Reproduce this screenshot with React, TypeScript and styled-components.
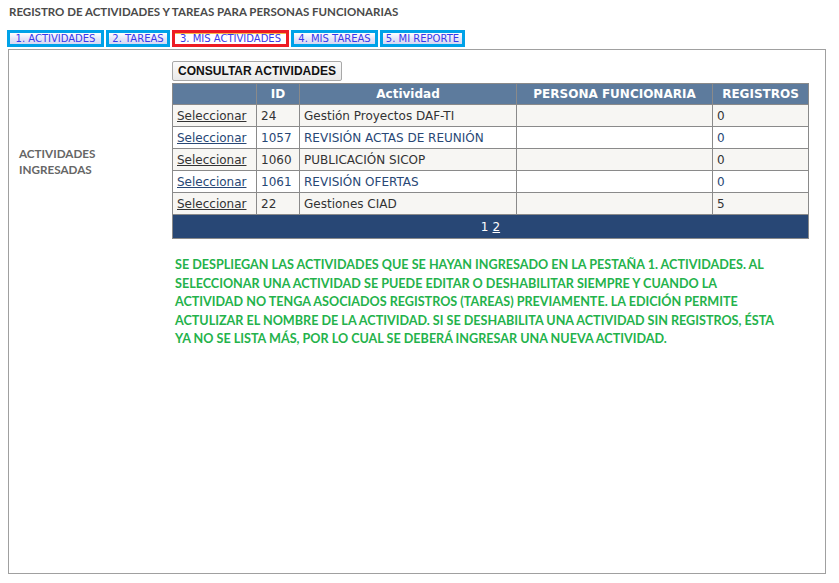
import React from 'react'
import styled, { createGlobalStyle } from 'styled-components'

const GlobalStyle = createGlobalStyle`
  html, body {
    margin: 0;
    padding: 0;
    background: #ffffff;
  }
  body {
    font-family: "DejaVu Sans", Verdana, sans-serif;
  }
`

const Page = styled.div`
  width: 839px;
  height: 583px;
  box-sizing: border-box;
  padding: 4px 13px 0 8px;
  overflow: hidden;
`

const Title = styled.div`
  font-family: Lato, "Open Sans", sans-serif;
  font-weight: 700;
  font-size: 11.5px;
  line-height: 16px;
  color: #4a4a4a;
  padding-left: 1px;
`

const TabBar = styled.div`
  display: flex;
  gap: 2px;
  margin: 10px 0 2px -1px;
`

const Tab = styled.a<{ $w: number; $active?: boolean }>`
  box-sizing: border-box;
  width: ${({ $w }) => $w}px;
  height: 17px;
  border: 3px solid ${({ $active }) => ($active ? '#ed1c24' : '#00a2e8')};
  background: ${({ $active }) =>
    $active ? '#ffffff' : 'linear-gradient(to bottom, #ffffff 0%, #e4e4f8 55%, #d8d8f2 100%)'};
  box-shadow: ${({ $active }) => ($active ? 'inset 0 1px 0 #f7b84a' : 'none')};
  color: #3838ea;
  font-family: "DejaVu Sans", Verdana, sans-serif;
  font-size: 10px;
  line-height: 11px;
  text-align: center;
  white-space: nowrap;
  text-decoration: none;
  cursor: pointer;
`

const Panel = styled.div`
  box-sizing: border-box;
  height: 525px;
  border: 1px solid #a0a0a0;
  padding-top: 11px;
  display: grid;
  grid-template-columns: 163px 636px;
  grid-template-rows: auto auto auto;
  align-content: start;
`

const ConsultButton = styled.button`
  grid-column: 2;
  justify-self: start;
  box-sizing: border-box;
  width: 170px;
  height: 20px;
  margin: 0 0 2px 0;
  padding: 0;
  border: 1px solid #a8a8a8;
  border-radius: 2px;
  background: linear-gradient(to bottom, #fbfbfb, #e9e9e9);
  font-family: "Liberation Sans", Arial, sans-serif;
  font-weight: 700;
  font-size: 12px;
  color: #111111;
  cursor: pointer;
`

const SideLabel = styled.div`
  grid-column: 1;
  align-self: center;
  padding-left: 10px;
  font-family: Lato, "Open Sans", sans-serif;
  font-weight: 700;
  font-size: 11.7px;
  line-height: 16px;
  color: #666666;
`

const Grid = styled.table`
  grid-column: 2;
  width: 636px;
  border-collapse: collapse;
  table-layout: fixed;
  border: 1px solid #8a8a8a;
  font-family: "DejaVu Sans", Verdana, sans-serif;
  font-size: 12px;
`

const HeadCell = styled.th`
  height: 21px;
  padding: 0 4px;
  background: #5d7b9d;
  color: #ffffff;
  font-weight: 700;
  text-align: center;
  border: 1px solid #8a8a8a;
  box-sizing: border-box;
`

const Row = styled.tr<{ $alt?: boolean }>`
  background: ${({ $alt }) => ($alt ? '#ffffff' : '#f7f6f3')};
  color: ${({ $alt }) => ($alt ? '#284775' : '#333333')};
`

const Cell = styled.td`
  height: 22px;
  padding: 0 4px;
  border: 1px solid #8a8a8a;
  box-sizing: border-box;
  white-space: nowrap;
  overflow: hidden;
`

const SelectLink = styled.a`
  color: inherit;
  text-decoration: underline;
  cursor: pointer;
`

const PagerCell = styled.td`
  height: 24px;
  padding: 0;
  background: #284775;
  color: #ffffff;
  text-align: center;
  border: 1px solid #8a8a8a;
  box-sizing: border-box;
`

const PageLink = styled.a`
  color: #ffffff;
  text-decoration: underline;
  margin-left: 4px;
`

const Note = styled.p`
  grid-column: 2;
  margin: 17px 0 0 0;
  padding-left: 3px;
  font-family: Lato, "Open Sans", sans-serif;
  font-weight: 700;
  font-size: 12.6px;
  line-height: 18.5px;
  color: #24b24b;
  white-space: nowrap;
`

const tabs = [
  { label: '1. ACTIVIDADES', w: 97 },
  { label: '2. TAREAS', w: 64 },
  { label: '3. MIS ACTIVIDADES', w: 117, active: true },
  { label: '4. MIS TAREAS', w: 87 },
  { label: '5. MI REPORTE', w: 85 },
]

const rows = [
  { id: '24', name: 'Gestión Proyectos DAF-TI', registros: '0' },
  { id: '1057', name: 'REVISIÓN ACTAS DE REUNIÓN', registros: '0' },
  { id: '1060', name: 'PUBLICACIÓN SICOP', registros: '0' },
  { id: '1061', name: 'REVISIÓN OFERTAS', registros: '0' },
  { id: '22', name: 'Gestiones CIAD', registros: '5' },
]

export default function App() {
  return (
    <>
      <GlobalStyle />
      <Page>
        <Title>REGISTRO DE ACTIVIDADES Y TAREAS PARA PERSONAS FUNCIONARIAS</Title>
        <TabBar>
          {tabs.map((t) => (
            <Tab key={t.label} $w={t.w} $active={t.active}>
              {t.label}
            </Tab>
          ))}
        </TabBar>
        <Panel>
          <ConsultButton>CONSULTAR ACTIVIDADES</ConsultButton>
          <SideLabel>
            ACTIVIDADES
            <br />
            INGRESADAS
          </SideLabel>
          <Grid>
            <colgroup>
              <col style={{ width: 84 }} />
              <col style={{ width: 43 }} />
              <col style={{ width: 217 }} />
              <col style={{ width: 196 }} />
              <col style={{ width: 96 }} />
            </colgroup>
            <thead>
              <tr>
                <HeadCell>&nbsp;</HeadCell>
                <HeadCell>ID</HeadCell>
                <HeadCell>Actividad</HeadCell>
                <HeadCell>PERSONA FUNCIONARIA</HeadCell>
                <HeadCell>REGISTROS</HeadCell>
              </tr>
            </thead>
            <tbody>
              {rows.map((r, i) => (
                <Row key={r.id} $alt={i % 2 === 1}>
                  <Cell>
                    <SelectLink>Seleccionar</SelectLink>
                  </Cell>
                  <Cell>{r.id}</Cell>
                  <Cell>{r.name}</Cell>
                  <Cell>&nbsp;</Cell>
                  <Cell>{r.registros}</Cell>
                </Row>
              ))}
              <tr>
                <PagerCell colSpan={5}>
                  <span>1</span>
                  <PageLink>2</PageLink>
                </PagerCell>
              </tr>
            </tbody>
          </Grid>
          <Note>
            SE DESPLIEGAN LAS ACTIVIDADES QUE SE HAYAN INGRESADO EN LA PESTAÑA 1. ACTIVIDADES. AL
            <br />
            SELECCIONAR UNA ACTIVIDAD SE PUEDE EDITAR O DESHABILITAR SIEMPRE Y CUANDO LA
            <br />
            ACTIVIDAD NO TENGA ASOCIADOS REGISTROS (TAREAS) PREVIAMENTE. LA EDICIÓN PERMITE
            <br />
            ACTULIZAR EL NOMBRE DE LA ACTIVIDAD. SI SE DESHABILITA UNA ACTIVIDAD SIN REGISTROS, ÉSTA
            <br />
            YA NO SE LISTA MÁS, POR LO CUAL SE DEBERÁ INGRESAR UNA NUEVA ACTIVIDAD.
          </Note>
        </Panel>
      </Page>
    </>
  )
}
